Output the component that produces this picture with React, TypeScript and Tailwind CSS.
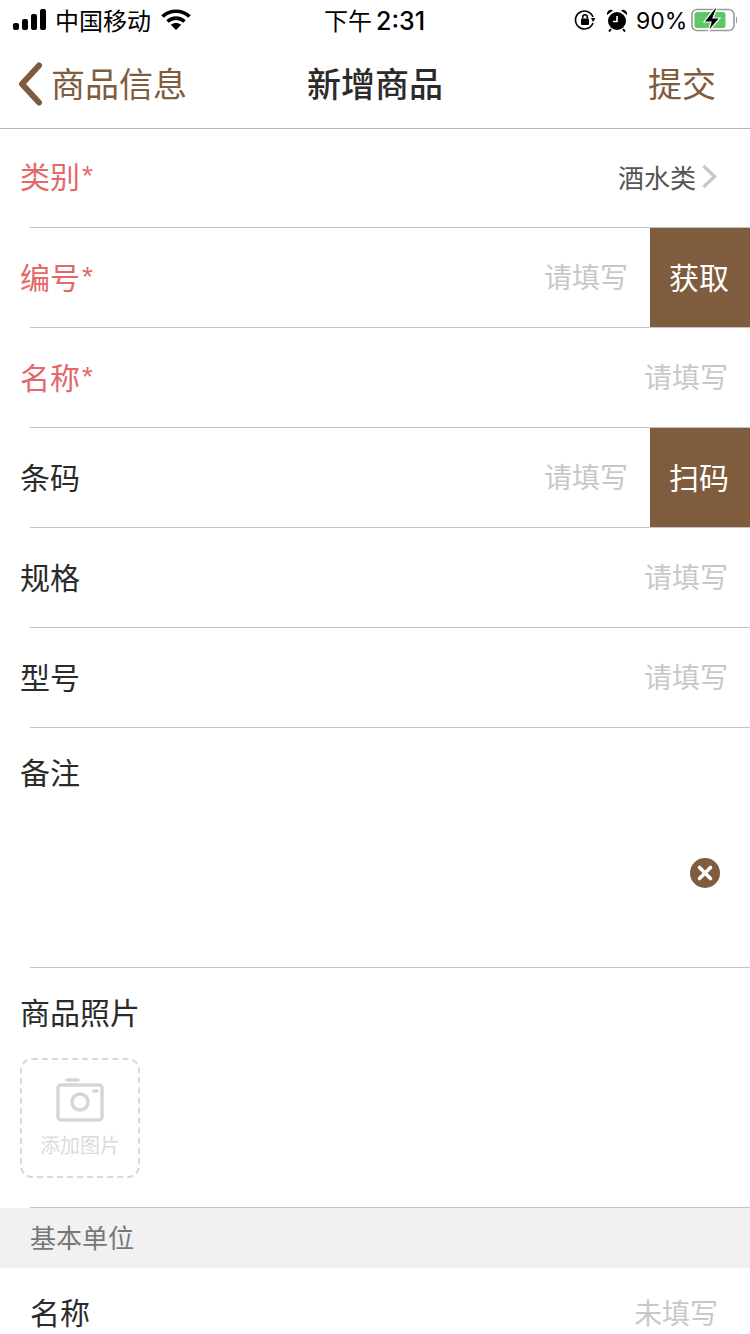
const font = { fontFamily: '"Noto Sans CJK SC", sans-serif' }
const latin = { fontFamily: '"Liberation Sans", sans-serif' }
const digits = { fontFamily: 'Inter, sans-serif' }

function Divider() {
  return <div className="ml-[30px] h-px bg-[#c4c4c4]" />
}

function Star() {
  return (
    <span className="ml-[2px] text-[28px] leading-none" style={latin}>
      *
    </span>
  )
}

function Row({ label, required, action }: { label: string; required?: boolean; action?: string }) {
  return (
    <>
      <div className="flex h-[99px] items-stretch pl-5">
        <div className={`flex items-center pb-[2px] text-[30px] ${required ? "text-[#e2686a]" : "text-[#2b2b2b]"}`}>
          {label}
          {required && <Star />}
        </div>
        <div className="flex flex-1 items-center justify-end pb-[3px] pr-[22px] text-[28px] text-[#c8c8c8]">请填写</div>
        {action && (
          <div className="flex w-[100px] items-center justify-center pb-[2px] pr-[2px] text-[30px] text-white bg-[#7f5c3e]">
            {action}
          </div>
        )}
      </div>
      <Divider />
    </>
  )
}

function StatusBar() {
  return (
    <div className="flex h-10 items-center justify-between pl-[13px] pr-[12px] text-[25px] text-black">
      <div className="flex items-center">
        <svg width="34" height="22" viewBox="0 0 34 22" fill="black">
          <rect x="0" y="14" width="6" height="7" rx="2" />
          <rect x="9" y="10" width="6" height="11" rx="2" />
          <rect x="18" y="5" width="6" height="16" rx="2" />
          <rect x="27" y="0" width="6" height="21" rx="2" />
        </svg>
        <span className="ml-[8px] text-[24px]">中国移动</span>
        <svg className="ml-[10px]" width="30" height="22" viewBox="0 0 30 22" fill="none" stroke="black" strokeWidth="3.6">
          <path d="M1.5 7.5C9 0.5 21 0.5 28.5 7.5" />
          <path d="M6.5 12.5C11.5 8 18.5 8 23.5 12.5" />
          <path d="M15 21l-5.2-5.2c3-2.4 7.4-2.4 10.4 0z" fill="black" stroke="none" />
        </svg>
      </div>
      <div className="absolute left-[324px] flex items-center text-[24px]">
        下午
        <span className="ml-[4px] mt-[3px] text-[25px] font-medium" style={digits}>
          2:31
        </span>
      </div>
      <div className="flex items-center">
        <svg width="22" height="22" viewBox="0 0 22 22" fill="none" stroke="black" strokeWidth="1.6">
          <path d="M19 14a9 9 0 1 1 0-6" />
          <path d="M17 9h4.5L19 13z" fill="black" stroke="none" />
          <rect x="7" y="9.5" width="8" height="6.5" rx="1" fill="black" stroke="none" />
          <path d="M8.7 9.5V8a2.3 2.3 0 0 1 4.6 0v1.5" />
        </svg>
        <svg className="ml-[10px]" width="22" height="24" viewBox="0 0 22 24">
          <circle cx="11" cy="13" r="9" fill="black" />
          <path d="M11 8v5.5H7" fill="none" stroke="white" strokeWidth="1.6" />
          <path d="M1 7a4 4 0 0 1 6-4.500zM21 7a4 4 0 0 0-6-4.500z" fill="black" />
          <path d="M5 21l-2 2.500M17 21l2 2.500" stroke="black" strokeWidth="2" />
        </svg>
        <span className="ml-[8px] mt-[2px] w-[50px] whitespace-nowrap text-[23px]" style={digits}>
          90%
        </span>
        <svg className="ml-[5px]" width="47" height="24" viewBox="0 0 47 24">
          <rect x="1" y="1.500" width="42" height="21" rx="5" fill="none" stroke="#9a9a9a" strokeWidth="1.6" />
          <rect x="3.500" y="4" width="31" height="16" rx="2.500" fill="#5fc864" />
          <path d="M45 8.500c1.500.5 1.500 6.500 0 7z" fill="#9a9a9a" />
          <path d="M24 0L13 14h7l-3 10 12-14h-7l4-10z" fill="black" stroke="white" strokeWidth="1.200" />
        </svg>
      </div>
    </div>
  )
}

export default function App() {
  return (
    <div className="relative h-[1334px] w-[750px] overflow-hidden bg-white" style={font}>
      <StatusBar />

      <div className="relative flex h-[89px] items-center justify-between border-b border-[#b5b5b5] pb-[4px] pl-[18px] pr-[34px]">
        <div className="flex items-center text-[34px] text-[#7f5c3e]">
          <svg className="mr-[8px] mt-[4px]" width="25" height="44" viewBox="0 0 25 44" fill="none" stroke="#7f5c3e" strokeWidth="6" strokeLinecap="round" strokeLinejoin="round">
            <path d="M21 3.500L4 22l17 18.500" />
          </svg>
          商品信息
        </div>
        <div className="absolute left-0 right-0 text-center text-[34px] font-medium text-[#2b2b2b]">新增商品</div>
        <div className="text-[34px] text-[#7f5c3e]">提交</div>
      </div>

      <div className="flex h-[98px] items-center pb-[3px] pl-5 pr-[32px]">
        <div className="flex items-center pb-[2px] text-[30px] text-[#e2686a]">
          类别
          <Star />
        </div>
        <div className="flex flex-1 items-center justify-end text-[26px] text-[#555]">
          酒水类
          <svg className="ml-[5px]" width="17" height="25" viewBox="0 0 17 25" fill="none" stroke="#c8c8c8" strokeWidth="3.400" strokeLinejoin="miter">
            <path d="M2.500 2l11 10.500-11 10.500" />
          </svg>
        </div>
      </div>
      <Divider />

      <Row label="编号" required action="获取" />
      <Row label="名称" required />
      <Row label="条码" action="扫码" />
      <Row label="规格" />
      <Row label="型号" />

      <div className="relative h-[239px] pl-5 pt-[21px] text-[30px] leading-[44px] text-[#2b2b2b]">
        备注
        <div className="absolute left-[690px] top-[130px] flex h-[30px] w-[30px] items-center justify-center rounded-full bg-[#7f5c3e]">
          <svg width="18" height="18" viewBox="0 0 18 18" stroke="white" strokeWidth="3.600" strokeLinecap="round">
            <path d="M3.500 3.500l11 11M14.500 3.500l-11 11" />
          </svg>
        </div>
      </div>
      <Divider />

      <div className="h-[239px] pl-5 pt-[21px]">
        <div className="text-[30px] leading-[44px] text-[#2b2b2b]">商品照片</div>
        <div className="mt-[25px] flex h-[120px] w-[120px] flex-col items-center rounded-[12px] border-2 border-dashed border-[#d9d9d9] pt-[18px]">
          <svg width="48" height="44" viewBox="0 0 48 44" fill="none" stroke="#d6d6d6" strokeWidth="3.500">
            <path d="M5 7h38a3 3 0 0 1 3 3v29a3 3 0 0 1-3 3H5a3 3 0 0 1-3-3V10a3 3 0 0 1 3-3z" />
            <circle cx="24" cy="24" r="8" />
            <path d="M11 2h11M38 13h3" strokeLinecap="round" />
          </svg>
          <div className="mt-[8px] text-[20px] leading-[30px] text-[#dcdcdc]">添加图片</div>
        </div>
      </div>
      <Divider />

      <div className="flex h-[60px] items-center bg-[#f1f1f1] pb-[3px] pl-[30px] text-[26px] text-[#777]">基本单位</div>

      <div className="flex h-[90px] items-center justify-between pb-[3px] pl-[30px] pr-[32px]">
        <div className="text-[30px] text-[#2b2b2b]">名称</div>
        <div className="text-[28px] text-[#c8c8c8]">未填写</div>
      </div>
    </div>
  )
}
